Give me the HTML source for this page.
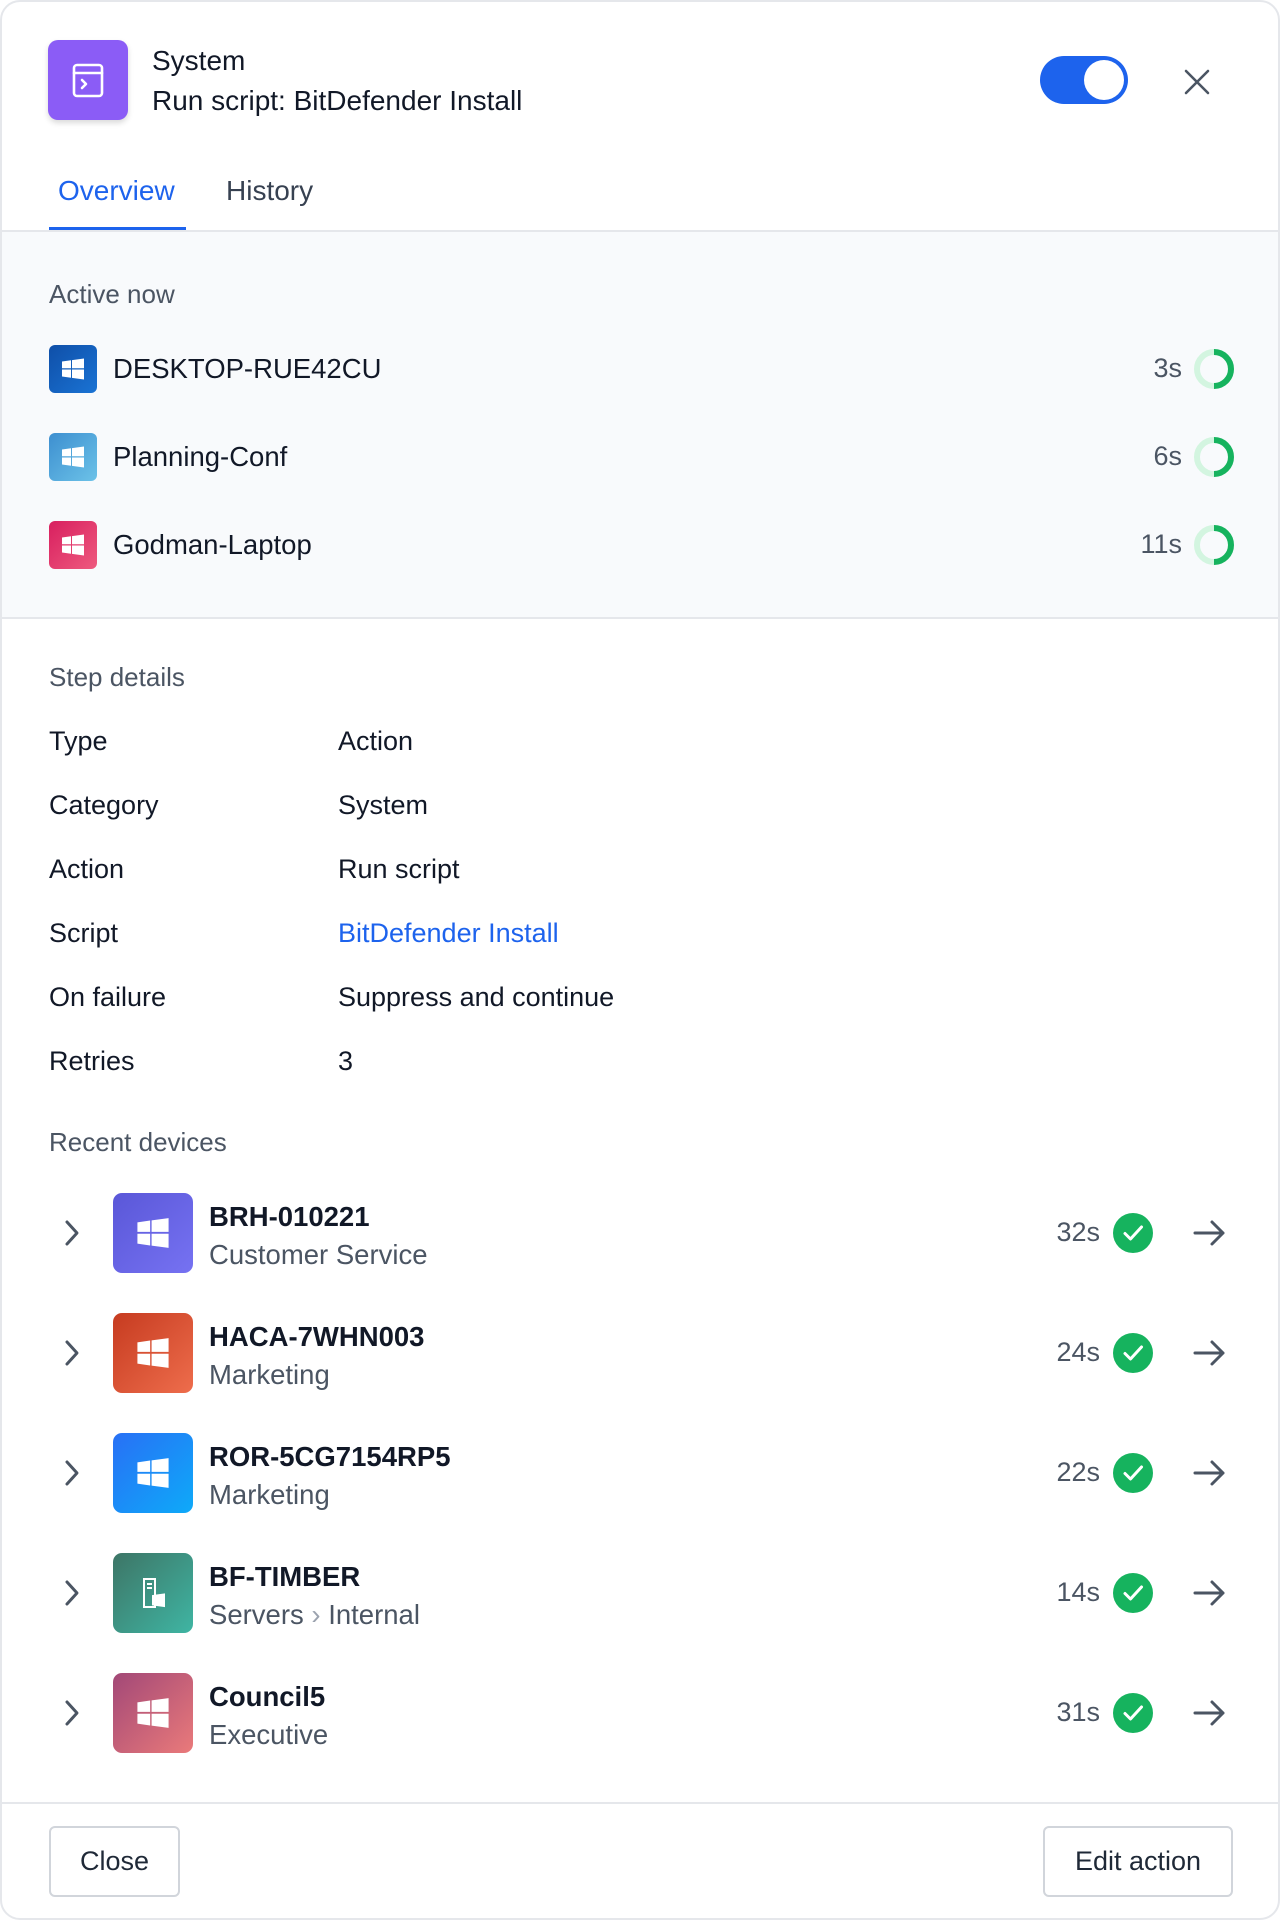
<!DOCTYPE html>
<html><head><meta charset="utf-8"><style>
*{box-sizing:border-box;margin:0;padding:0}
body{width:1280px;height:1920px;background:#fff;font-family:"Liberation Sans",sans-serif;color:#111827;position:relative;overflow:hidden}
.card{position:absolute;left:0;top:0;width:1280px;height:1920px;border:2px solid #e5e7eb;border-radius:20px;overflow:hidden}
.abs{position:absolute}
.t{position:absolute;white-space:nowrap;line-height:1}
.gray{color:#4b5563}
.win{position:absolute;border-radius:6px;display:flex;align-items:center;justify-content:center}
.big{border-radius:9px}
.lab{font-size:27px}
</style></head><body><div class="card">
<div class="abs" style="left:46px;top:38px;width:80px;height:80px;border-radius:10px;background:#8b5cf6;box-shadow:0 3px 6px rgba(0,0,0,.15);display:flex;align-items:center;justify-content:center">
<svg width="36" height="36" viewBox="0 0 36 36" fill="none" stroke="#fff" stroke-width="2.6" stroke-linecap="round" stroke-linejoin="round"><rect x="4" y="3" width="28" height="31" rx="3"/><path d="M4 11h28M12 18l4 4-4 4"/></svg></div>
<div class="t" style="left:150px;top:45px;font-size:28px">System</div>
<div class="t" style="left:150px;top:85px;font-size:28px">Run script: BitDefender Install</div>
<div class="abs" style="left:1038px;top:54px;width:88px;height:48px;border-radius:24px;background:#1d63ed"><div class="abs" style="right:4px;top:4px;width:40px;height:40px;border-radius:50%;background:#fff"></div></div>
<svg class="abs" style="left:1181px;top:66px" width="28" height="28" viewBox="0 0 28 28" stroke="#4b5563" stroke-width="2.6" stroke-linecap="round"><path d="M3 3l22 22M25 3L3 25"/></svg>
<div class="t" style="left:56px;top:175px;font-size:28px;color:#1d63ed">Overview</div>
<div class="t" style="left:224px;top:175px;font-size:28px;color:#374151">History</div>
<div class="abs" style="left:47px;top:225px;width:137px;height:3px;background:#1d63ed"></div>
<div class="abs" style="left:0;top:228px;width:1280px;height:389px;background:#f8fafc;border-top:2px solid #e5e7eb;border-bottom:2px solid #e5e7eb"></div>
<div class="t gray" style="left:47px;top:279px;font-size:26px">Active now</div>
<div class="win" style="left:47px;top:343px;width:48px;height:48px;background:linear-gradient(135deg,#0f4fa8,#1a73d4)"><svg width="24" height="24" viewBox="0 0 24 24" fill="#fff"><path d="M1 4.5l9-1.3v8H1zM11 3.1L23 1.5v9.7H11zM1 12.5h9v8.3l-9-1.3zM11 12.5h12v10L11 20.9z"/></svg></div>
<div class="t" style="left:111px;top:353px;font-size:27.5px">DESKTOP-RUE42CU</div>
<div class="win" style="left:47px;top:431px;width:48px;height:48px;background:linear-gradient(135deg,#3d8fd0,#6cc2e8)"><svg width="24" height="24" viewBox="0 0 24 24" fill="#fff"><path d="M1 4.5l9-1.3v8H1zM11 3.1L23 1.5v9.7H11zM1 12.5h9v8.3l-9-1.3zM11 12.5h12v10L11 20.9z"/></svg></div>
<div class="t" style="left:111px;top:441px;font-size:27.5px">Planning-Conf</div>
<div class="win" style="left:47px;top:519px;width:48px;height:48px;background:linear-gradient(135deg,#d81f5f,#ee5a7e)"><svg width="24" height="24" viewBox="0 0 24 24" fill="#fff"><path d="M1 4.5l9-1.3v8H1zM11 3.1L23 1.5v9.7H11zM1 12.5h9v8.3l-9-1.3zM11 12.5h12v10L11 20.9z"/></svg></div>
<div class="t" style="left:111px;top:529px;font-size:27.5px">Godman-Laptop</div>
<div class="t gray" style="right:96px;top:353px;font-size:27px">3s</div>
<div class="t gray" style="right:96px;top:441px;font-size:27px">6s</div>
<div class="t gray" style="right:96px;top:529px;font-size:27px">11s</div>
<svg class="abs" style="left:1192px;top:347px" width="40" height="40" viewBox="0 0 40 40" fill="none" stroke-width="6"><circle cx="20" cy="20" r="17" stroke="#d3f5e0"/><path d="M20 3a17 17 0 0 1 0 34" stroke="#16b35e"/></svg>
<svg class="abs" style="left:1192px;top:435px" width="40" height="40" viewBox="0 0 40 40" fill="none" stroke-width="6"><circle cx="20" cy="20" r="17" stroke="#d3f5e0"/><path d="M20 3a17 17 0 0 1 0 34" stroke="#16b35e"/></svg>
<svg class="abs" style="left:1192px;top:523px" width="40" height="40" viewBox="0 0 40 40" fill="none" stroke-width="6"><circle cx="20" cy="20" r="17" stroke="#d3f5e0"/><path d="M20 3a17 17 0 0 1 0 34" stroke="#16b35e"/></svg>
<div class="t gray" style="left:47px;top:662px;font-size:26px">Step details</div>
<div class="t lab" style="left:47px;top:726px">Type</div><div class="t lab" style="left:336px;top:726px">Action</div>
<div class="t lab" style="left:47px;top:790px">Category</div><div class="t lab" style="left:336px;top:790px">System</div>
<div class="t lab" style="left:47px;top:854px">Action</div><div class="t lab" style="left:336px;top:854px">Run script</div>
<div class="t lab" style="left:47px;top:918px">Script</div><div class="t lab" style="left:336px;top:918px;color:#1d63ed">BitDefender Install</div>
<div class="t lab" style="left:47px;top:982px">On failure</div><div class="t lab" style="left:336px;top:982px">Suppress and continue</div>
<div class="t lab" style="left:47px;top:1046px">Retries</div><div class="t lab" style="left:336px;top:1046px">3</div>
<div class="t gray" style="left:47px;top:1127px;font-size:26px">Recent devices</div>
<div id="dev"></div>
<script>
var d=[["BRH-010221","Customer Service","32s","#5a57d8,#7672f2",0],["HACA-7WHN003","Marketing","24s","#c63b20,#ee6d4c",0],["ROR-5CG7154RP5","Marketing","22s","#2870f5,#0eaaf9",0],["BF-TIMBER","Servers <span style='color:#9ca3af'>&#8250;</span> Internal","14s","#3d7566,#3fb5a3",1],["Council5","Executive","31s","#a24877,#ea7a7a",0]];
var h="";var win='<svg width="34" height="34" viewBox="0 0 24 24" fill="#fff"><path d="M1 4.5l9-1.3v8H1zM11 3.1L23 1.5v9.7H11zM1 12.5h9v8.3l-9-1.3zM11 12.5h12v10L11 20.9z"/></svg>';
var srv='<svg width="34" height="34" viewBox="0 0 34 34" fill="none" stroke="#fff" stroke-width="2"><rect x="8" y="3" width="11" height="28"/><path d="M11 8h5M11 12h5"/><path d="M17 20l11-1.5v5H17zM17 25h11v5l-11-1.5z" fill="#fff"/></svg>';
d.forEach(function(r,i){var c=1231+i*120;
h+='<svg class="abs" style="left:61px;top:'+(c-14)+'px" width="18" height="28" viewBox="0 0 18 28" fill="none" stroke="#4b5563" stroke-width="3" stroke-linecap="round" stroke-linejoin="round"><path d="M4 3l10 11-10 11"/></svg>';
h+='<div class="win big" style="left:111px;top:'+(c-40)+'px;width:80px;height:80px;background:linear-gradient(135deg,'+r[3]+')">'+(r[4]?srv:win)+'</div>';
h+='<div class="t" style="left:207px;top:'+(c-30)+'px;font-size:27.5px;font-weight:bold">'+r[0]+'</div>';
h+='<div class="t gray" style="left:207px;top:'+(c+8)+'px;font-size:27.5px">'+r[1]+'</div>';
h+='<div class="t gray" style="right:178px;top:'+(c-14)+'px;font-size:27px">'+r[2]+'</div>';
h+='<svg class="abs" style="left:1111px;top:'+(c-20)+'px" width="40" height="40" viewBox="0 0 40 40"><circle cx="20" cy="20" r="20" fill="#16b35e"/><path d="M12 20.5l5.5 5.5L28.5 14" fill="none" stroke="#fff" stroke-width="3" stroke-linecap="round" stroke-linejoin="round"/></svg>';
h+='<svg class="abs" style="left:1190px;top:'+(c-14)+'px" width="34" height="28" viewBox="0 0 34 28" fill="none" stroke="#4b5563" stroke-width="3" stroke-linecap="round" stroke-linejoin="round"><path d="M3 14h28M20 3l11 11-11 11"/></svg>';});
document.getElementById("dev").innerHTML=h;
</script>
<div class="abs" style="left:0;top:1800px;width:1280px;height:2px;background:#e5e7eb"></div>
<div class="abs" style="left:47px;top:1824px;width:131px;height:71px;border:2px solid #d1d5db;border-radius:6px;font-size:27px;display:flex;align-items:center;justify-content:center;color:#1f2937">Close</div>
<div class="abs" style="left:1041px;top:1824px;width:190px;height:71px;border:2px solid #d1d5db;border-radius:6px;font-size:27px;display:flex;align-items:center;justify-content:center;color:#1f2937">Edit action</div>
</div></body></html>
